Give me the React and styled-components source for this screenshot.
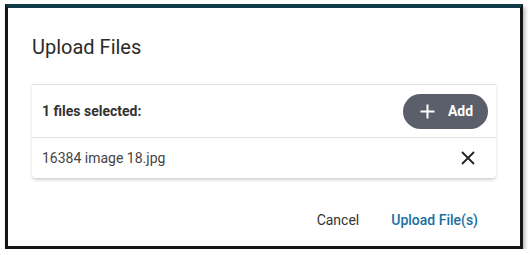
import React from "react";
import styled, { createGlobalStyle } from "styled-components";

const Global = createGlobalStyle`
  html, body { margin: 0; padding: 0; background: #fff; }
  body { font-family: Roboto, "Liberation Sans", Arial, sans-serif; }
  * { box-sizing: border-box; }
`;

const Page = styled.div`
  padding: 4px 0 0 5px;
`;

const Frame = styled.div`
  width: 518px;
  height: 245px;
  background: #fff;
  border: 3px solid #151515;
  border-top: 4px solid #123b4a;
  box-shadow: 2px 3px 4px rgba(0, 0, 0, 0.3);
  display: flex;
  flex-direction: column;
  padding: 27px 24px 0 24px;
`;

const Title = styled.h2`
  margin: 0 0 25px;
  font-size: 20px;
  line-height: 24px;
  font-weight: 400;
  color: #2b2b2b;
`;

const Card = styled.div`
  border-top: 1px solid #e2e2e2;
  box-shadow: 0 2px 3px rgba(0, 0, 0, 0.18);
  border-radius: 0 0 4px 4px;
`;

const HeaderRow = styled.div`
  height: 52px;
  display: flex;
  align-items: center;
  justify-content: space-between;
  padding: 0 8px 0 10px;
`;

const Label = styled.span`
  font-size: 14px;
  font-weight: 700;
  color: #333;
`;

const AddButton = styled.button`
  width: 85px;
  height: 35px;
  border: none;
  border-radius: 18px;
  background: #5b5f69;
  color: #fff;
  font-family: inherit;
  font-size: 14px;
  font-weight: 700;
  display: flex;
  align-items: center;
  justify-content: center;
  gap: 13px;
  padding: 0 0 0 2px;
`;

const FileRow = styled.div`
  height: 41px;
  border-top: 1px solid #e2e2e2;
  display: flex;
  align-items: center;
  justify-content: space-between;
  padding: 0 21px 0 10px;
`;

const FileName = styled.span`
  font-size: 14px;
  color: #444;
`;

const Footer = styled.div`
  display: flex;
  justify-content: flex-end;
  gap: 12px;
  margin-top: 24px;
  padding-right: 8px;
`;

const TextButton = styled.button`
  height: 36px;
  border: none;
  background: none;
  padding: 0 10px;
  font-family: inherit;
  font-size: 14px;
  font-weight: ${(p) => (p.$primary ? 500 : 400)};
  color: ${(p) => (p.$primary ? "#1b6e9e" : "#333")};
`;

const Plus = () => (
  <svg width="15" height="15" viewBox="0 0 15 15">
    <path d="M7.5 0.5v14M0.5 7.5h14" stroke="#fff" strokeWidth="2" />
  </svg>
);

const Close = () => (
  <svg width="14" height="14" viewBox="0 0 14 14">
    <path d="M1 1l12 12M13 1L1 13" stroke="#222" strokeWidth="1.8" />
  </svg>
);

export default function App() {
  return (
    <>
      <Global />
      <Page>
        <Frame>
          <Title>Upload Files</Title>
          <Card>
            <HeaderRow>
              <Label>1 files selected:</Label>
              <AddButton>
                <Plus />
                Add
              </AddButton>
            </HeaderRow>
            <FileRow>
              <FileName>16384 image 18.jpg</FileName>
              <Close />
            </FileRow>
          </Card>
          <Footer>
            <TextButton>Cancel</TextButton>
            <TextButton $primary>Upload File(s)</TextButton>
          </Footer>
        </Frame>
      </Page>
    </>
  );
}
